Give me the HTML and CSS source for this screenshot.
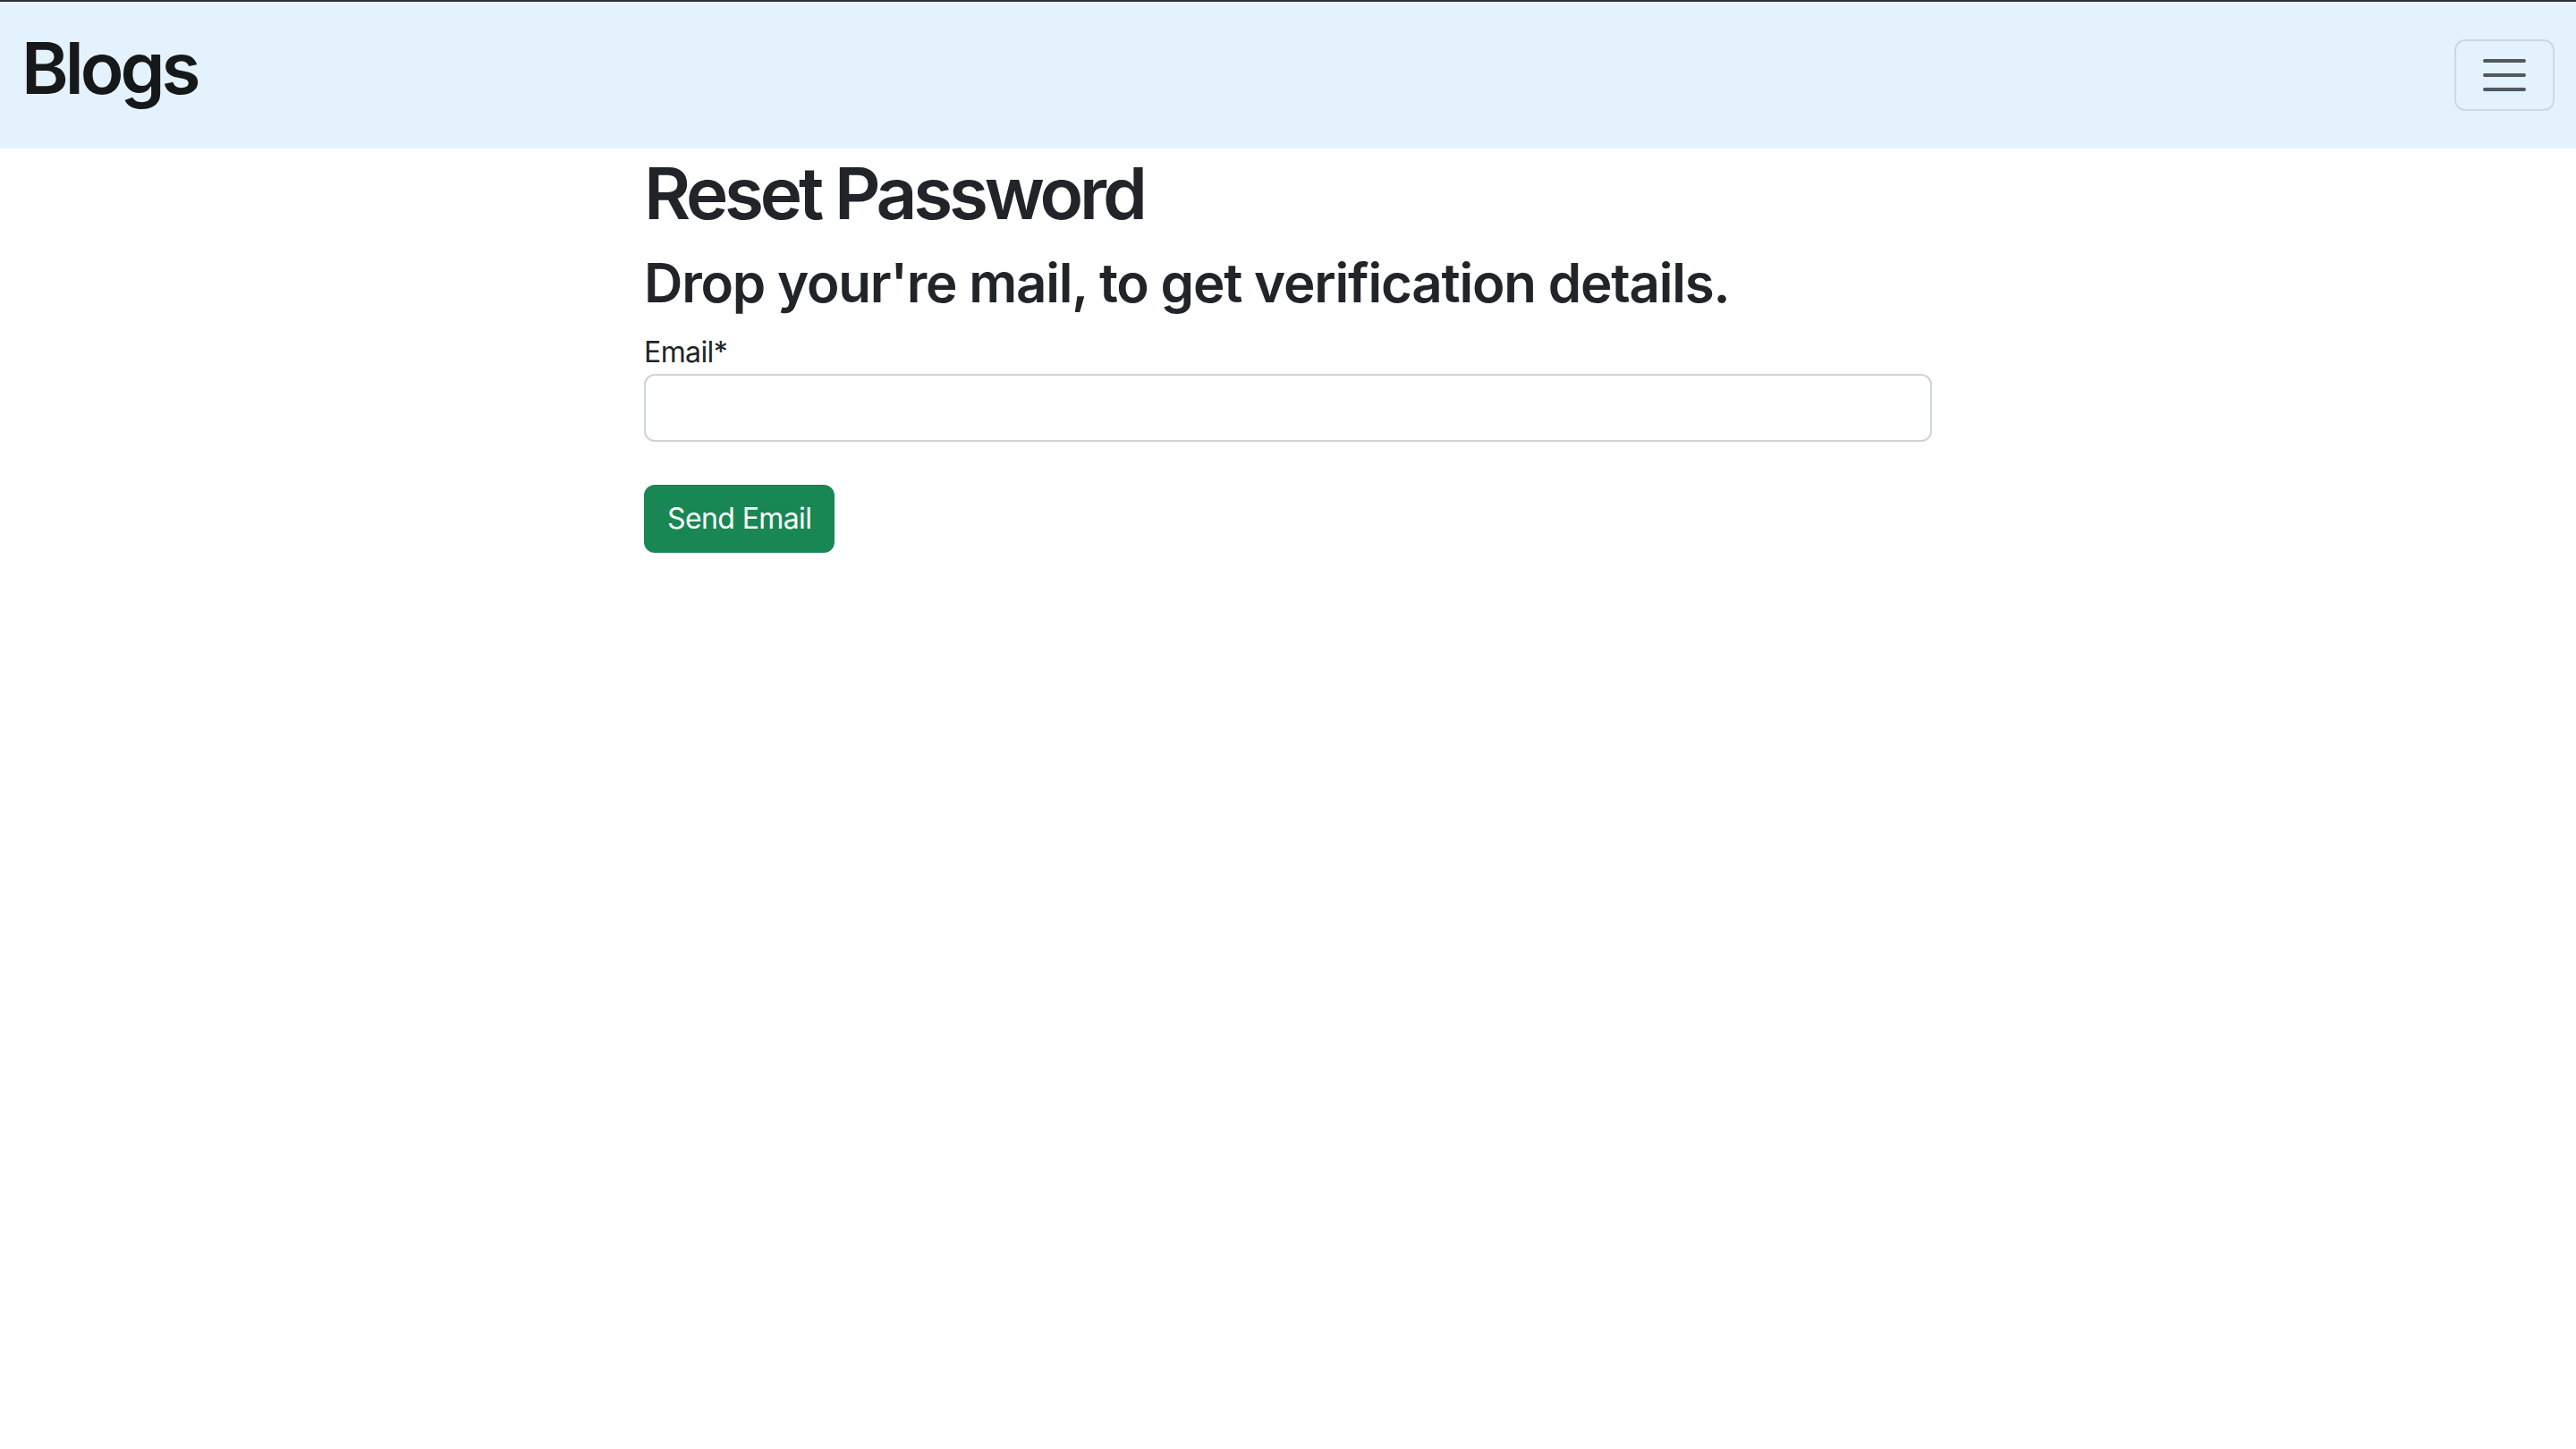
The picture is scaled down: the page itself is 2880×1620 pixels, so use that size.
FILE: index.html
```html
<!DOCTYPE html>
<html lang="en">
<head>
<meta charset="utf-8">
<title>Reset Password</title>
<link rel="stylesheet" href="styles.css">
</head>
<body>
<nav class="navbar">
  <a class="brand" href="#"><h1 class="brand-title">Blogs</h1></a>
  <button class="toggler" type="button" aria-label="Toggle navigation">
    <svg class="toggler-icon" viewBox="0 0 30 30" width="60" height="60"><path d="M4 7h22M4 15h22M4 23h22" stroke="rgba(33,37,41,0.75)" stroke-width="2" stroke-linecap="round" fill="none"/></svg>
  </button>
</nav>
<main class="container">
  <h1 class="title">Reset Password</h1>
  <h3 class="subtitle">Drop your're mail, to get verification details.</h3>
  <form class="form">
    <div class="field">
      <label class="label" for="email">Email*</label>
      <input class="input" id="email" type="email">
    </div>
    <button class="btn" type="submit">Send Email</button>
  </form>
</main>
</body>
</html>
```
FILE: styles.css
```css
* { box-sizing: border-box; }
html, body { margin: 0; padding: 0; }
body {
  font-family: Inter, "Liberation Sans", sans-serif;
  color: #212529;
  background: #fff;
  border-top: 2px solid #2b3040;
}
.navbar {
  background: #e3f2fd;
  display: flex;
  align-items: center;
  justify-content: space-between;
  padding: 16px 24px;
  height: 164px;
}
.brand { text-decoration: none; color: rgba(0,0,0,0.9); padding: 10px 0; }
.brand-title {
  margin: 0 0 16px;
  font-size: 80px;
  line-height: 96px;
  font-weight: 600;
  letter-spacing: -4px;
}
.toggler {
  width: 112px;
  height: 80px;
  padding: 8px 24px;
  border: 2px solid rgba(0,0,0,0.1);
  border-radius: 12px;
  background: transparent;
  display: flex;
  align-items: center;
  justify-content: center;
}
.toggler-icon { display: block; }
.container {
  width: 1440px;
  margin: 0 auto;
}
.title {
  margin: 2px 0 16px;
  font-size: 80px;
  line-height: 96px;
  font-weight: 600;
  letter-spacing: -4.2px;
}
.subtitle {
  margin: 0 0 18px;
  font-size: 60px;
  line-height: 72px;
  font-weight: 600;
  letter-spacing: -1.2px;
}
.field { margin-bottom: 48px; }
.label {
  display: block;
  font-size: 32px;
  line-height: 48px;
  letter-spacing: -0.6px;
}
.input {
  display: block;
  width: 100%;
  height: 76px;
  padding: 12px 24px;
  font-size: 32px;
  border: 2px solid #ced4da;
  border-radius: 12px;
  background: #fff;
}
.btn {
  display: block;
  background: #198754;
  color: #fff;
  border: 2px solid #198754;
  border-radius: 12px;
  padding: 12px 24px;
  font-family: Inter, "Liberation Sans", sans-serif;
  font-size: 32px;
  line-height: 48px;
  letter-spacing: -0.6px;
  height: 76px;
}
```
